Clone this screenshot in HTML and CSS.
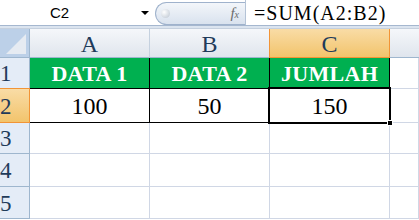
FILE: index.html
```html
<!DOCTYPE html>
<html lang="id">
  <head>
    <meta charset="UTF-8" />
    <title>Sheet</title>
    <link rel="stylesheet" href="styles.css">
  </head>
  <body>
    <div class="formula_bar">
      <div class="name_box">
        <span class="name_text">C2</span>
        <span class="drop_arrow"></span>
      </div>
      <div class="fx_pill">
        <span class="pill_knob"></span>
        <span class="fx_label">f<sub>x</sub></span>
      </div>
      <div class="formula_input">=SUM(A2:B2)</div>
    </div>
    <div class="bar_gap"></div>

    <div class="sheet">
      <div class="corner"><span class="corner_tri"></span></div>
      <div class="col_head">A</div>
      <div class="col_head">B</div>
      <div class="col_head active">C</div>
      <div class="col_head last"></div>

      <div class="row_head">1</div>
      <div class="cell green line_r line_b">DATA 1</div>
      <div class="cell green line_r line_b">DATA 2</div>
      <div class="cell green line_r line_b">JUMLAH</div>
      <div class="cell"></div>

      <div class="row_head active">2</div>
      <div class="cell line_r line_b">100</div>
      <div class="cell line_r line_b">50</div>
      <div class="cell line_r line_b selected">150<span class="fill_handle"></span></div>
      <div class="cell"></div>

      <div class="row_head">3</div>
      <div class="cell"></div>
      <div class="cell"></div>
      <div class="cell"></div>
      <div class="cell"></div>

      <div class="row_head">4</div>
      <div class="cell"></div>
      <div class="cell"></div>
      <div class="cell"></div>
      <div class="cell"></div>

      <div class="row_head">5</div>
      <div class="cell"></div>
      <div class="cell"></div>
      <div class="cell"></div>
      <div class="cell"></div>
    </div>
  </body>
</html>
```

FILE: styles.css
```css
* {
  box-sizing: border-box;
}
body {
  margin: 0;
  width: 419px;
  height: 220px;
  overflow: hidden;
  background: #ffffff;
  font-family: "Liberation Serif", serif;
}

/* formula bar */
.formula_bar {
  display: flex;
  height: 26px;
  background: #ffffff;
  border-bottom: 1px solid #a5b7cf;
}
.name_box {
  display: flex;
  align-items: center;
  width: 155px;
}
.name_text {
  margin-left: 50px;
  font-family: "Liberation Sans", sans-serif;
  font-size: 15px;
  color: #000;
}
.drop_arrow {
  margin-left: 72px;
  width: 0;
  height: 0;
  border-left: 4px solid transparent;
  border-right: 4px solid transparent;
  border-top: 4px solid #000;
}
.fx_pill {
  display: flex;
  align-items: center;
  justify-content: space-between;
  width: 90px;
  margin-top: 2px;
  height: 23px;
  padding: 0 6px 0 5px;
  border: 1px solid #9fb2cc;
  border-right: none;
  border-radius: 12px 0 0 12px;
  background: linear-gradient(#f3f6fa, #d9e2ee);
}
.pill_knob {
  width: 9px;
  height: 9px;
  border-radius: 50%;
  background: radial-gradient(circle at 35% 35%, #ffffff, #b9c3cf);
}
.fx_label {
  font-style: italic;
  font-size: 15px;
  color: #6b6b6b;
}
.fx_label sub {
  font-size: 10px;
  vertical-align: 0;
}
.formula_input {
  flex: 1;
  border-left: 1px solid #b4c3d6;
  padding-left: 8px;
  line-height: 26px;
  font-size: 20px;
  letter-spacing: 1px;
  color: #000;
}
.bar_gap {
  height: 3px;
  background: #dbe4ef;
  border-bottom: 1px solid #c5d0de;
}

/* grid */
.sheet {
  display: grid;
  grid-template-columns: 30px 120px 120px 120px 1fr;
  grid-template-rows: 29px 31px 34px 31px 33px 32px;
}
.corner {
  background: #bcd0e8;
  border-right: 1px solid #9eb6ce;
  border-bottom: 1px solid #9eb6ce;
  position: relative;
}
.corner_tri {
  position: absolute;
  right: 3px;
  bottom: 3px;
  width: 0;
  height: 0;
  border-left: 20px solid transparent;
  border-bottom: 20px solid #e6ebf2;
}
.col_head {
  display: flex;
  align-items: center;
  justify-content: center;
  padding-top: 2px;
  font-size: 24px;
  color: #1f3b5a;
  background: linear-gradient(#f5f7fa, #dfe5ed);
  border-right: 1px solid #c5d1df;
  border-bottom: 1px solid #9eb6ce;
}
.col_head.active {
  background: linear-gradient(#f9dca6, #f2c46c);
  border-right: 1px solid #f29436;
  border-left: 1px solid #f29436;
  margin-left: -1px;
  border-bottom: 1px solid #f29436;
}
.col_head.last {
  border-right: none;
}
.row_head {
  display: flex;
  align-items: center;
  padding-left: 0;
  padding-top: 2px;
  font-size: 23px;
  color: #1f3b5a;
  background: #e4ecf7;
  border-right: 1px solid #9eb6ce;
  border-bottom: 1px solid #9eb6ce;
}
.row_head.active {
  background: linear-gradient(#f9dca6, #f2c46c);
  border-right: 1px solid #f29436;
  border-bottom: 1px solid #f29436;
  border-top: 1px solid #f29436;
  margin-top: -1px;
}
.cell {
  display: flex;
  align-items: center;
  justify-content: center;
  padding-top: 2px;
  font-size: 24px;
  color: #000;
  border-right: 1px solid #d0d7e5;
  border-bottom: 1px solid #d0d7e5;
}
.cell.green {
  background: #00b050;
  color: #ffffff;
  font-weight: bold;
  font-size: 22px;
  letter-spacing: 0.3px;
}
.cell.line_r {
  border-right: 1px solid #000;
}
.cell.line_b {
  border-bottom: 1px solid #000;
}
.cell.selected {
  position: relative;
}
.cell.selected::after {
  content: "";
  position: absolute;
  left: -2px;
  top: -2px;
  right: -2px;
  bottom: -2px;
  border: 2px solid #000;
  box-shadow: inset 0 0 0 1px #ffffff;
}
.fill_handle {
  position: absolute;
  right: -4px;
  bottom: -4px;
  width: 6px;
  height: 6px;
  background: #000;
  border: 1px solid #ffffff;
  z-index: 2;
}
```
